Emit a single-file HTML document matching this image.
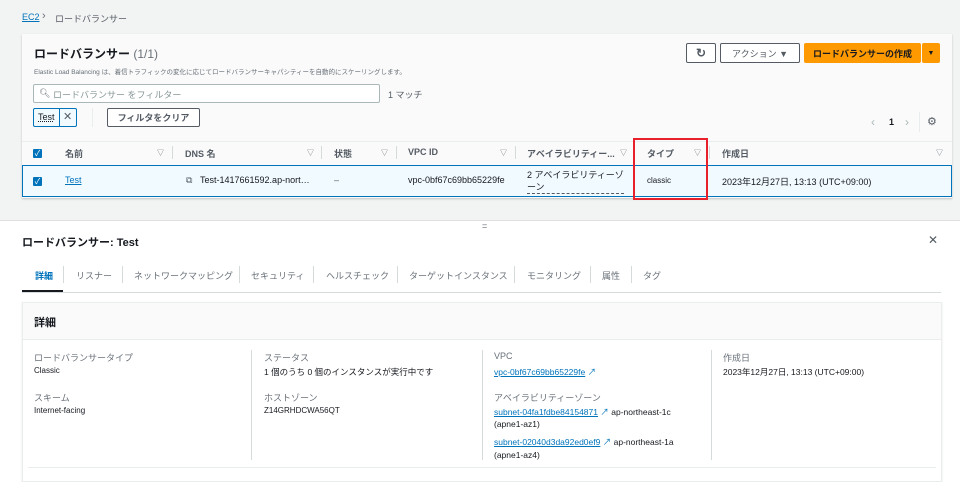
<!DOCTYPE html>
<html><head><meta charset="utf-8"><style>
*{box-sizing:border-box;margin:0;padding:0}
body{width:960px;height:479px;overflow:hidden;background:#fff;font-family:"Liberation Sans","Noto Sans CJK JP",sans-serif;color:#16191f;font-size:9px;position:relative}
.a{position:absolute;white-space:nowrap}
.top{position:absolute;left:0;top:0;width:960px;height:221px;background:#f2f3f3;border-bottom:1px solid #e0e0e0}
.card{position:absolute;left:22px;top:34px;width:930px;height:164px;background:#fafafa;box-shadow:0 1px 2px rgba(0,0,0,.2)}
.btn{position:absolute;border:1px solid #545b64;background:#fff;border-radius:2px;font-weight:bold;color:#545b64;display:flex;align-items:center;justify-content:center;font-size:9px}
.lnk{color:#0073bb;text-decoration:underline}
.g{color:#687078}
.cb{position:absolute;width:9px;height:9px;background:#0073bb;border-radius:1px;color:#fff;font-size:8px;line-height:9px;text-align:center}
.hd{font-weight:bold;color:#545b64}
.tri{color:#687078;font-size:7px}
.vd{position:absolute;width:1px;background:#d5dbdb}
</style></head><body>
<div class="top"></div>
<div class="a lnk" style="left:22px;top:12px">EC2</div>
<div class="a g" style="left:42px;top:10px;font-size:11px">›</div>
<div class="a" style="left:55px;top:12px;color:#545b64">ロードバランサー</div>
<div class="card"></div>
<div class="a" style="left:34px;top:45px;font-size:12px;font-weight:bold">ロードバランサー <span style="font-weight:normal;color:#687078">(1/1)</span></div>
<div class="a g" style="left:34px;top:66px;font-size:6.5px">Elastic Load Balancing は、着信トラフィックの変化に応じてロードバランサーキャパシティーを自動的にスケーリングします。</div>
<div class="a" style="left:33px;top:84px;width:347px;height:19px;border:1px solid #aab7b8;background:#fff;border-radius:2px"></div>
<div class="a g" style="left:39px;top:88px;font-size:9px">🔍︎</div>
<div class="a" style="left:53px;top:88px;color:#879596">ロードバランサー をフィルター</div>
<div class="a" style="left:388px;top:88px;color:#545b64">1 マッチ</div>
<div class="a" style="left:33px;top:108px;width:44px;height:19px;border:1px solid #0073bb;background:#f1faff;border-radius:2px"></div>
<div class="a" style="left:59px;top:108px;width:1px;height:19px;background:#0073bb"></div>
<div class="a" style="left:38px;top:112px;text-decoration:underline dotted">Test</div>
<div class="a" style="left:63px;top:110px;font-size:11px;color:#545b64">✕</div>
<div class="a" style="left:92px;top:108px;width:1px;height:19px;background:#eaeded"></div>
<div class="btn" style="left:107px;top:108px;width:93px;height:19px">フィルタをクリア</div>
<div class="btn" style="left:686px;top:43px;width:30px;height:20px;font-size:12px">↻</div>
<div class="btn" style="left:720px;top:43px;width:80px;height:20px;font-weight:normal">アクション ▼</div>
<div class="btn" style="left:804px;top:43px;width:117px;height:20px;background:#ff9900;border-color:#ff9900;color:#16191f">ロードバランサーの作成</div>
<div class="btn" style="left:922px;top:43px;width:18px;height:20px;background:#ff9900;border-color:#ff9900;color:#16191f;font-size:7px">▼</div>
<div class="a" style="left:871px;top:115px;color:#aab7b8;font-size:12px">‹</div>
<div class="a" style="left:889px;top:117px;font-weight:bold">1</div>
<div class="a" style="left:905px;top:115px;color:#aab7b8;font-size:12px">›</div>
<div class="a" style="left:919px;top:112px;width:1px;height:20px;background:#eaeded"></div>
<div class="a" style="left:927px;top:115px;font-size:11px;color:#545b64">⚙</div>
<div class="a" style="left:22px;top:141px;width:930px;height:1px;background:#eaeded"></div>
<div class="cb" style="left:33px;top:149px">✓</div>
<div class="a hd" style="left:65px;top:147px">名前</div><div class="a tri" style="left:157px;top:148px">▽</div><div class="vd" style="left:172px;top:146px;height:13px"></div>
<div class="a hd" style="left:185px;top:147px">DNS 名</div><div class="a tri" style="left:307px;top:148px">▽</div><div class="vd" style="left:321px;top:146px;height:13px"></div>
<div class="a hd" style="left:334px;top:147px">状態</div><div class="a tri" style="left:381px;top:148px">▽</div><div class="vd" style="left:396px;top:146px;height:13px"></div>
<div class="a hd" style="left:408px;top:147px">VPC ID</div><div class="a tri" style="left:500px;top:148px">▽</div><div class="vd" style="left:515px;top:146px;height:13px"></div>
<div class="a hd" style="left:527px;top:147px">アベイラビリティー...</div><div class="a tri" style="left:620px;top:148px">▽</div>
<div class="a hd" style="left:647px;top:147px">タイプ</div><div class="a tri" style="left:694px;top:148px">▽</div><div class="vd" style="left:709px;top:146px;height:13px"></div>
<div class="a hd" style="left:722px;top:147px">作成日</div><div class="a tri" style="left:936px;top:148px">▽</div>
<div class="a" style="left:22px;top:165px;width:930px;height:32px;background:#f1faff;border:1px solid #0073bb"></div>
<div class="cb" style="left:33px;top:177px">✓</div>
<div class="a lnk" style="left:65px;top:175px">Test</div>
<div class="a" style="left:186px;top:175px;color:#545b64">⧉</div>
<div class="a" style="left:200px;top:175px">Test-1417661592.ap-nort…</div>
<div class="a" style="left:334px;top:175px;color:#545b64">–</div>
<div class="a" style="left:408px;top:175px">vpc-0bf67c69bb65229fe</div>
<div class="a" style="left:527px;top:169px;line-height:12px;border-bottom:1px dashed #545b64">2 アベイラビリティーゾ<br>ーン</div>
<div class="a" style="left:647px;top:176px;font-size:8px">classic</div>
<div class="a" style="left:722px;top:175px">2023年12月27日, 13:13 (UTC+09:00)</div>
<div class="a" style="left:633px;top:138px;width:75px;height:62px;border:2px solid #e8202b"></div>

<div class="a g" style="left:482px;top:221px;font-size:9px">=</div>
<div class="a" style="left:22px;top:234px;font-size:11px;font-weight:bold">ロードバランサー: Test</div>
<div class="a" style="left:928px;top:233px;font-size:12px;color:#545b64">✕</div>
<div class="a" style="left:22px;top:292px;width:919px;height:1px;background:#d5dbdb"></div>
<div class="a" style="left:22px;top:290px;width:41px;height:2px;background:#16191f"></div>
<div class="a" style="top:269px;left:35px;color:#0073bb;font-weight:bold">詳細</div>
<div class="a g" style="top:269px;left:76px">リスナー</div>
<div class="a g" style="top:269px;left:134px">ネットワークマッピング</div>
<div class="a g" style="top:269px;left:251px">セキュリティ</div>
<div class="a g" style="top:269px;left:326px">ヘルスチェック</div>
<div class="a g" style="top:269px;left:409px">ターゲットインスタンス</div>
<div class="a g" style="top:269px;left:527px">モニタリング</div>
<div class="a g" style="top:269px;left:602px">属性</div>
<div class="a g" style="top:269px;left:643px">タグ</div>
<div class="vd" style="left:63px;top:266px;height:17px"></div><div class="vd" style="left:122px;top:266px;height:17px"></div><div class="vd" style="left:239px;top:266px;height:17px"></div><div class="vd" style="left:313px;top:266px;height:17px"></div><div class="vd" style="left:397px;top:266px;height:17px"></div><div class="vd" style="left:514px;top:266px;height:17px"></div><div class="vd" style="left:590px;top:266px;height:17px"></div><div class="vd" style="left:631px;top:266px;height:17px"></div>
<div class="a" style="left:22px;top:302px;width:920px;height:180px;border:1px solid #eaeded;box-shadow:0 1px 2px rgba(0,0,0,.1)"></div>
<div class="a" style="left:23px;top:303px;width:918px;height:37px;background:#fafafa;border-bottom:1px solid #eaeded"></div>
<div class="a" style="left:34px;top:314px;font-size:11px;font-weight:bold">詳細</div>
<div class="vd" style="left:251px;top:350px;height:110px"></div><div class="vd" style="left:482px;top:350px;height:110px"></div><div class="vd" style="left:711px;top:350px;height:110px"></div>
<div class="a" style="left:28px;top:467px;width:908px;height:1px;background:#eaeded"></div>
<div class="a g" style="left:34px;top:351px">ロードバランサータイプ</div>
<div class="a" style="left:34px;top:366px;font-size:8px">Classic</div>
<div class="a g" style="left:34px;top:391px">スキーム</div>
<div class="a" style="left:34px;top:406px;font-size:8px">Internet-facing</div>
<div class="a g" style="left:264px;top:351px">ステータス</div>
<div class="a" style="left:264px;top:366px;font-size:8.5px">1 個のうち 0 個のインスタンスが実行中です</div>
<div class="a g" style="left:264px;top:391px">ホストゾーン</div>
<div class="a" style="left:264px;top:406px;font-size:8px">Z14GRHDCWA56QT</div>
<div class="a g" style="left:494px;top:351px">VPC</div>
<div class="a" style="left:494px;top:366px;font-size:8.5px"><span class="lnk">vpc-0bf67c69bb65229fe</span> <span style="color:#0073bb">↗</span></div>
<div class="a g" style="left:494px;top:391px">アベイラビリティーゾーン</div>
<div class="a" style="left:494px;top:406px;font-size:8.5px"><span class="lnk">subnet-04fa1fdbe84154871</span> <span style="color:#0073bb">↗</span> ap-northeast-1c</div>
<div class="a" style="left:494px;top:419px;font-size:8.5px">(apne1-az1)</div>
<div class="a" style="left:494px;top:436px;font-size:8.5px"><span class="lnk">subnet-02040d3da92ed0ef9</span> <span style="color:#0073bb">↗</span> ap-northeast-1a</div>
<div class="a" style="left:494px;top:450px;font-size:8.5px">(apne1-az4)</div>
<div class="a g" style="left:723px;top:351px">作成日</div>
<div class="a" style="left:723px;top:366px;font-size:8.5px">2023年12月27日, 13:13 (UTC+09:00)</div>
</body></html>
